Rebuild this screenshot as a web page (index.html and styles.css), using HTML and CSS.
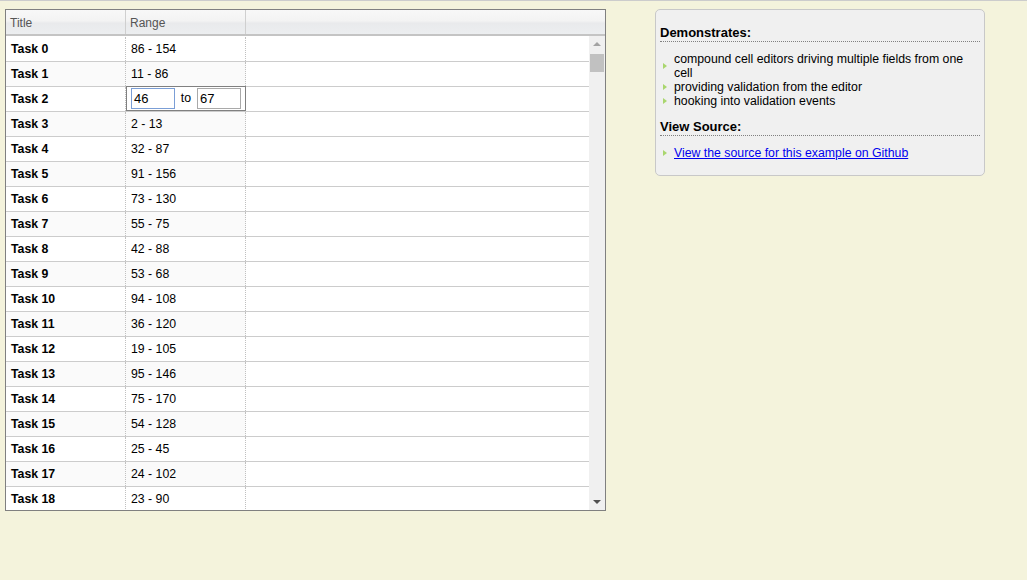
FILE: index.html
```html
<!DOCTYPE html>
<html>
<head>
<meta charset="utf-8">
<link rel="stylesheet" href="styles.css">
</head>
<body>
<div class="page">
  <div class="grid">
    <div class="header">
      <div class="hcell c1">Title</div>
      <div class="hcell c2">Range</div>
      <div class="hfill"></div>
    </div>
    <div class="viewport">
      <div class="rows" id="rows"></div>
      <div class="scrollbar">
        <div class="arrow up"></div>
        <div class="track"><div class="thumb"></div></div>
        <div class="arrow down"></div>
      </div>
    </div>
  </div>
  <div class="options">
    <h2>Demonstrates:</h2>
    <ul>
      <li>compound cell editors driving multiple fields from one cell</li>
      <li>providing validation from the editor</li>
      <li>hooking into validation events</li>
    </ul>
    <h2>View Source:</h2>
    <ul>
      <li><a href="#">View the source for this example on Github</a></li>
    </ul>
  </div>
</div>
<script>
var ranges = ["86 - 154","11 - 86",null,"2 - 13","32 - 87","91 - 156","73 - 130","55 - 75","42 - 88","53 - 68","94 - 108","36 - 120","19 - 105","95 - 146","75 - 170","54 - 128","25 - 45","24 - 102","23 - 90"];
var html = "";
for (var i = 0; i < ranges.length; i++) {
  html += '<div class="row ' + (i % 2 ? 'odd' : 'even') + '"><div class="cell c1">Task ' + i + '</div>';
  if (ranges[i] === null) {
    html += '<div class="cell c2 editing"><span class="inp focus">46</span><span class="to">to</span><span class="inp">67</span></div>';
  } else {
    html += '<div class="cell c2">' + ranges[i] + '</div>';
  }
  html += '<div class="cell fill"></div></div>';
}
document.getElementById("rows").innerHTML = html;
</script>
</body>
</html>
```
FILE: styles.css
```css
html, body {
  margin: 0;
  padding: 0;
}
body {
  background: #f4f3dc;
  border-top: 1px solid #cccccc;
  font-family: "Liberation Sans", Arial, sans-serif;
  font-size: 12.3px;
  color: #000;
  height: 579px;
  overflow: hidden;
}
.page {
  display: flex;
  align-items: flex-start;
  padding: 8px 0 0 5px;
}
.grid {
  width: 599px;
  height: 500px;
  border: 1px solid #808080;
  background: #fff;
  display: flex;
  flex-direction: column;
  overflow: hidden;
}
.header {
  display: flex;
  height: 24px;
  background: linear-gradient(#f8f8f8 0%, #f3f3f3 45%, #e9eaec 55%, #eceef0 100%);
  border-bottom: 2px solid #c4c4c4;
  flex: none;
}
.hcell {
  box-sizing: border-box;
  padding: 6px 0 0 4px;
  color: #555;
  border-right: 1px solid #cfcfcf;
  font-size: 12px;
}
.hcell.c1 { width: 120px; }
.hcell.c2 { width: 120px; }
.hfill { flex: 1; }
.viewport {
  flex: 1;
  display: flex;
  overflow: hidden;
}
.rows {
  flex: 1;
  overflow: hidden;
  padding-top: 1px;
}
.row {
  display: flex;
  height: 24px;
  border-bottom: 1px solid #cccccc;
}
.row.odd { background: #fafafa; }
.row.even { background: #ffffff; }
.cell {
  box-sizing: border-box;
  height: 24px;
  line-height: 24px;
  padding-left: 5px;
  border-right: 1px dotted #c0c0c0;
  white-space: nowrap;
}
.cell.c1 { width: 120px; font-weight: bold; }
.cell.c2 { width: 120px; }
.cell.fill { flex: 1; border-right: none; background: #fff; }
.cell.editing {
  border: 1px solid #808080;
  padding: 1px 0 0 4px;
  height: 25px;
  margin-top: -1px;
  display: flex;
  align-items: flex-start;
  background: #fff;
  line-height: normal;
}
.inp {
  box-sizing: border-box;
  display: inline-block;
  width: 44px;
  height: 21px;
  line-height: 19px;
  border: 1px solid #a9a9a9;
  padding-left: 2px;
  font-size: 13px;
  background: #fff;
}
.inp.focus {
  border-color: #7b9ed6;
}
.to {
  display: inline-block;
  width: 22px;
  text-align: center;
  line-height: 21px;
}
.scrollbar {
  width: 16px;
  background: #f0f0f0;
  display: flex;
  flex-direction: column;
  flex: none;
}
.arrow {
  height: 17px;
  position: relative;
  flex: none;
}
.arrow.up::after {
  content: "";
  position: absolute;
  left: 4px;
  top: 6px;
  border-left: 4px solid transparent;
  border-right: 4px solid transparent;
  border-bottom: 4px solid #a3a3a3;
}
.arrow.down::after {
  content: "";
  position: absolute;
  left: 4px;
  top: 7px;
  border-left: 4px solid transparent;
  border-right: 4px solid transparent;
  border-top: 4px solid #505050;
}
.track {
  flex: 1;
  padding: 1px 1px 0 1px;
}
.thumb {
  height: 18px;
  background: #c1c1c1;
}
.options {
  margin-left: 49px;
  width: 320px;
  height: 155px;
  background: #f0f0f0;
  border: 1px solid #c8c8c8;
  border-radius: 5px;
  padding: 5px 4px;
}
.options h2 {
  font-size: 13px;
  font-weight: bold;
  margin: 10px 0 0 0;
  line-height: 16px;
  border-bottom: 1px dotted #808080;
}
.options ul {
  list-style: none;
  margin: 10px 0 0 0;
  padding: 0;
}
.options ul + h2 { margin-top: 11px; }
.options li {
  position: relative;
  padding-left: 14px;
  line-height: 14px;
}
.options li::before {
  content: "";
  position: absolute;
  left: 3px;
  top: 50%;
  margin-top: -3px;
  border-top: 3px solid transparent;
  border-bottom: 3px solid transparent;
  border-left: 4px solid #a9d66e;
}
.options a { color: #0000ee; }
```
